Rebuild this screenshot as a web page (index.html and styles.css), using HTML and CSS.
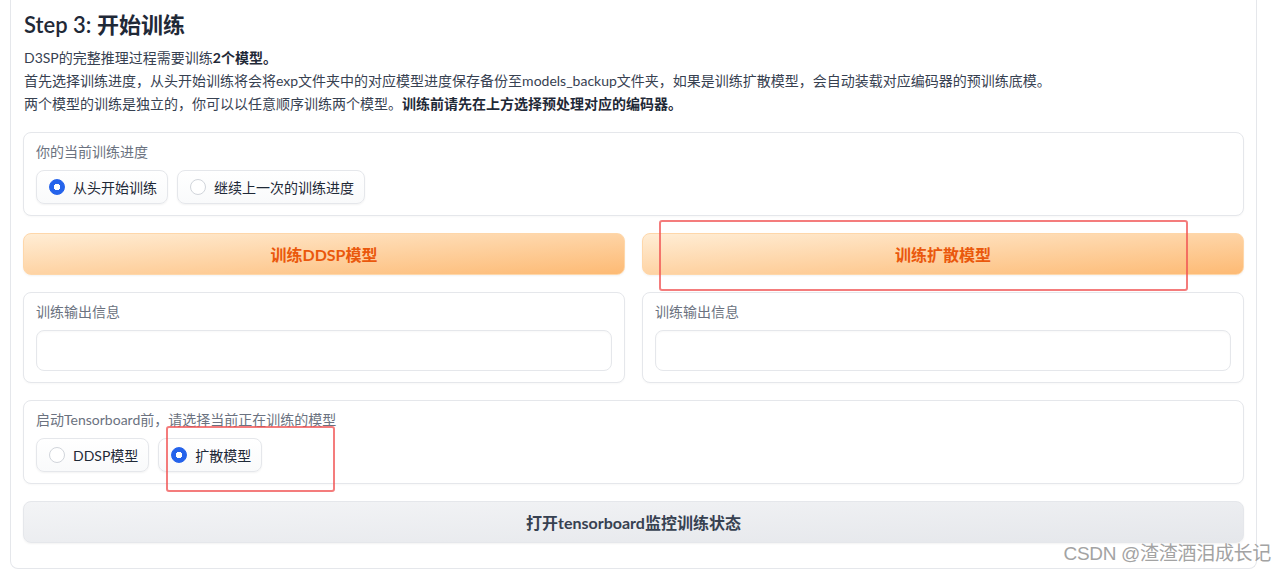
FILE: index.html
```html
<!DOCTYPE html>
<html>
<head>
  <title>Step 3</title>
  <link rel="stylesheet" href="styles.css">
</head>
<body>
  <div class="panel">
    <h2 class="title">Step 3: <b>开始训练</b></h2>
    <div class="intro">
      <p>D3SP的完整推理过程需要训练<b>2个模型。</b></p>
      <p>首先选择训练进度，从头开始训练将会将exp文件夹中的对应模型进度保存备份至models_backup文件夹，如果是训练扩散模型，会自动装载对应编码器的预训练底模。</p>
      <p>两个模型的训练是独立的，你可以以任意顺序训练两个模型。<b>训练前请先在上方选择预处理对应的编码器。</b></p>
    </div>

    <div class="block">
      <div class="block-label">你的当前训练进度</div>
      <div class="radio-row">
        <label class="radio checked"><span class="dot"></span>从头开始训练</label>
        <label class="radio"><span class="dot"></span>继续上一次的训练进度</label>
      </div>
    </div>

    <div class="two-col">
      <button class="btn-primary">训练DDSP模型</button>
      <div class="marked">
        <button class="btn-primary">训练扩散模型</button>
        <div class="annot annot-btn"></div>
      </div>
    </div>

    <div class="two-col">
      <div class="block">
        <div class="block-label">训练输出信息</div>
        <div class="textbox"></div>
      </div>
      <div class="block">
        <div class="block-label">训练输出信息</div>
        <div class="textbox"></div>
      </div>
    </div>

    <div class="block">
      <div class="block-label">启动Tensorboard前，请选择当前正在训练的模型</div>
      <div class="radio-row">
        <label class="radio"><span class="dot"></span>DDSP模型</label>
        <div class="marked">
          <label class="radio checked"><span class="dot"></span>扩散模型</label>
          <div class="annot annot-radio"></div>
        </div>
      </div>
    </div>

    <button class="btn-secondary">打开tensorboard监控训练状态</button>
  </div>
  <div class="watermark">CSDN @渣渣酒泪成长记</div>
</body>
</html>
```

FILE: styles.css
```css
body {
  margin: 0;
  background: #ffffff;
  font-family: Lato, "Noto Sans CJK SC", sans-serif;
  color: #374151;
}

.panel {
  margin-left: 10px;
  width: 1221px;
  margin-top: -2px;
  padding: 12px 12px 25px 12px;
  border: 1px solid #e5e7eb;
  border-top: none;
  border-radius: 0 0 8px 8px;
  display: flex;
  flex-direction: column;
  gap: 17px;
}

.title {
  margin: 0 0 -11px 1px;
  font-size: 22px;
  line-height: 30px;
  font-weight: 600;
  color: #1f2937;
}

.title b {
  font-weight: 700;
}

.intro {
  margin-left: 1px;
  font-size: 14px;
  line-height: 23px;
  color: #374151;
}

.intro p {
  margin: 0;
}

.intro b {
  color: #1f2937;
  font-weight: 700;
}

.block {
  border: 1px solid #e5e7eb;
  border-radius: 8px;
  background: #ffffff;
  padding: 9px 12px 11px 12px;
  box-shadow: 0 1px 2px rgba(0, 0, 0, 0.03);
}

.block-label {
  font-size: 14px;
  line-height: 20px;
  color: #6b7280;
  margin-bottom: 8px;
}

.radio-row {
  display: flex;
  gap: 9px;
}

.radio {
  display: flex;
  align-items: center;
  gap: 8px;
  height: 32px;
  padding: 0 10px 0 12px;
  border: 1px solid #e5e7eb;
  border-radius: 8px;
  background: linear-gradient(to bottom, #ffffff, #f9fafb);
  box-shadow: 0 1px 2px rgba(0, 0, 0, 0.05);
  font-size: 14px;
  color: #1f2937;
}

.dot {
  width: 14px;
  height: 14px;
  border-radius: 50%;
  border: 1px solid #d1d5db;
  background: #ffffff;
  box-sizing: content-box;
}

.radio.checked .dot {
  border-color: #2563eb;
  background: radial-gradient(circle, #ffffff 0 3px, #2563eb 3.5px);
}

.two-col {
  display: grid;
  grid-template-columns: 1fr 1fr;
  gap: 17px;
}

.marked {
  position: relative;
  display: flex;
}

.marked .btn-primary {
  flex: 1;
}

.btn-primary {
  height: 42px;
  border: 1px solid #fed7aa;
  border-radius: 8px;
  background: linear-gradient(to bottom right, #ffedd5, #fdba74);
  color: #ea580c;
  font-family: Lato, "Noto Sans CJK SC", sans-serif;
  font-size: 16px;
  font-weight: 700;
  box-shadow: 0 1px 2px rgba(0, 0, 0, 0.05);
}

.btn-secondary {
  height: 42px;
  border: 1px solid #e5e7eb;
  border-radius: 8px;
  background: linear-gradient(to bottom right, #f3f4f6, #e5e7eb);
  color: #374151;
  font-family: Lato, "Noto Sans CJK SC", sans-serif;
  font-size: 16px;
  font-weight: 700;
  box-shadow: 0 1px 2px rgba(0, 0, 0, 0.05);
}

.textbox {
  height: 39px;
  border: 1px solid #e5e7eb;
  border-radius: 8px;
  background: #ffffff;
  box-shadow: inset 0 1px 2px rgba(0, 0, 0, 0.03);
}

/* red marks drawn over the screenshot */
.annot {
  position: absolute;
  border: 2px solid rgba(240, 80, 80, 0.75);
  border-radius: 3px;
  pointer-events: none;
}

.annot-btn {
  left: 17px;
  top: -13px;
  width: 525px;
  height: 67px;
}

.annot-radio {
  left: 8px;
  top: -12px;
  width: 165px;
  height: 62px;
}

.watermark {
  position: absolute;
  right: 14px;
  top: 538px;
  font-family: "Liberation Sans", "Noto Sans CJK SC", sans-serif;
  font-size: 19px;
  color: #a3a3a3;
  letter-spacing: -0.3px;
}
```
